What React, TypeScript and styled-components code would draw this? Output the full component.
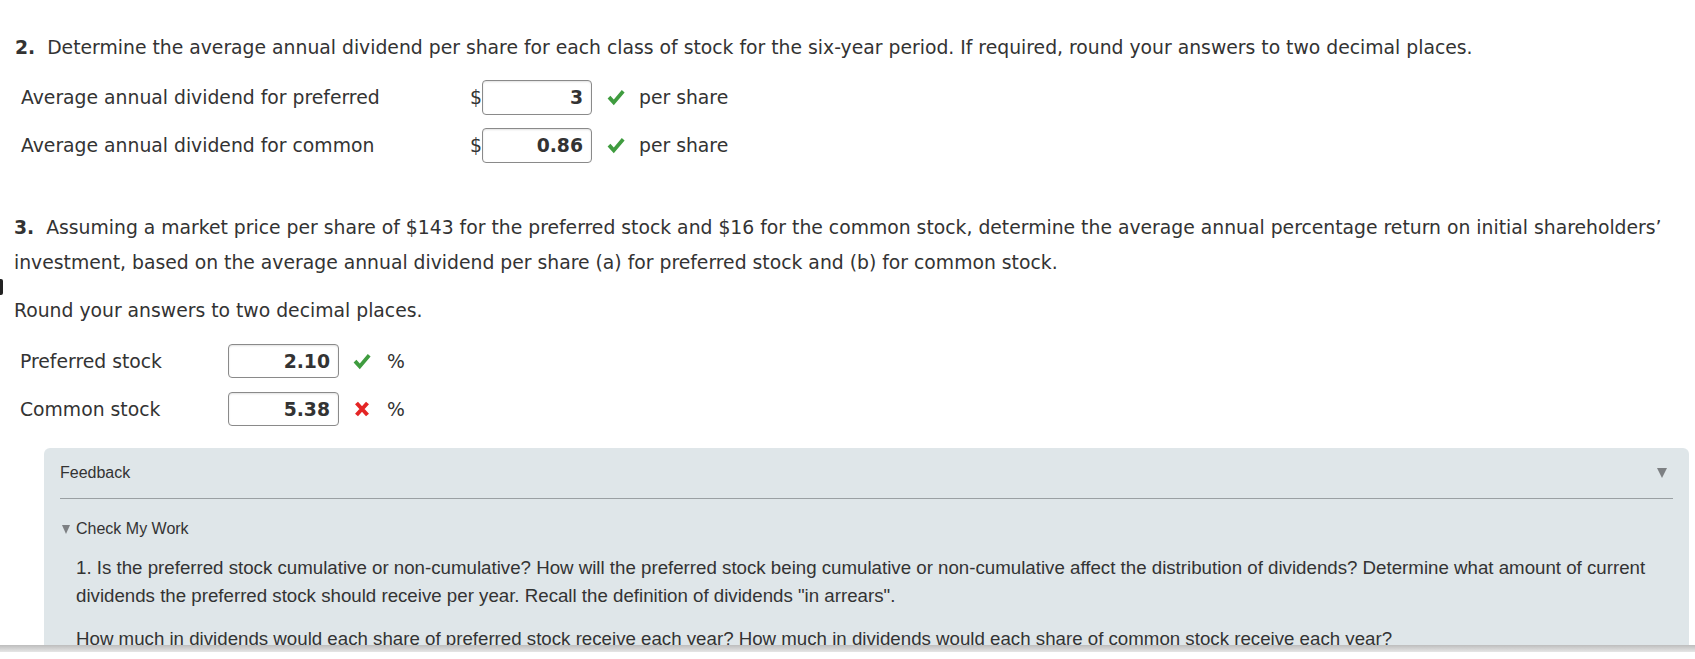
import React from "react";
import styled, { createGlobalStyle } from "styled-components";

const Global = createGlobalStyle`
  html, body { margin: 0; padding: 0; background: #fff; }
  body { font-family: "DejaVu Sans", Verdana, sans-serif; font-size: 18.8px; color: #333; }
`;

const Page = styled.div`
  width: 1695px;
  height: 659px;
  overflow: hidden;
  display: flex;
  flex-direction: column;
`;

const Viewport = styled.div`
  height: 645px;
  overflow: hidden;
  position: relative;
  flex: none;
`;

const BottomBar = styled.div`
  height: 7px;
  flex: none;
  background: linear-gradient(#bdbdbd, #d6d6d6 60%, #e6e6e6);
`;

const Section = styled.section<{ $top: number; $left: number }>`
  padding-top: ${(p) => p.$top}px;
  padding-left: ${(p) => p.$left}px;
`;

const Question = styled.p<{ $lh: number }>`
  margin: 0;
  line-height: ${(p) => p.$lh}px;
  b { font-weight: bold; }
`;

const Instruction = styled.p`
  margin: 15px 0 0;
  line-height: 32px;
`;

const Rows = styled.div<{ $top: number; $gap: number }>`
  margin-top: ${(p) => p.$top}px;
  display: flex;
  flex-direction: column;
  gap: ${(p) => p.$gap}px;
`;

const Row = styled.div<{ $label: number }>`
  display: grid;
  grid-template-columns: ${(p) => p.$label}px auto auto auto auto;
  justify-content: start;
  align-items: center;
`;

const Label = styled.span`
  white-space: nowrap;
`;

const Dollar = styled.span`
  width: 12px;
  text-align: left;
`;

const Field = styled.div<{ $w: number; $h: number }>`
  width: ${(p) => p.$w}px;
  height: ${(p) => p.$h}px;
  box-sizing: border-box;
  border: 1px solid #8a8a8a;
  border-radius: 4px;
  box-shadow: inset 0 1px 2px rgba(0, 0, 0, 0.12);
  display: flex;
  align-items: center;
  justify-content: flex-end;
  padding-right: 8px;
  font-weight: bold;
  color: #333;
  background: #fff;
`;

const Mark = styled.span<{ $ml: number }>`
  margin-left: ${(p) => p.$ml}px;
  width: 18px;
  display: flex;
  align-items: center;
  justify-content: center;
  svg { flex: none; display: block; }
`;

const Unit = styled.span<{ $ml: number }>`
  margin-left: ${(p) => p.$ml}px;
  white-space: nowrap;
`;

const EdgeMark = styled.div`
  position: absolute;
  left: 0;
  top: 279px;
  width: 3px;
  height: 16px;
  background: #222;
  border-radius: 0 2px 2px 0;
`;

const Panel = styled.div`
  margin: 22px 6px 0 44px;
  background: #dfe6e9;
  border-radius: 6px 6px 0 0;
  padding: 15px 16px 40px 16px;
  font-family: "Liberation Sans", Arial, sans-serif;
  color: #333;
`;

const PanelHead = styled.div`
  display: flex;
  justify-content: space-between;
  align-items: center;
  font-size: 16px;
  line-height: 20px;
  padding-bottom: 15px;
  border-bottom: 1px solid #9aa0a3;
`;

const Caret = styled.span<{ $size: number }>`
  display: inline-block;
  width: 0;
  height: 0;
  border-left: ${(p) => p.$size / 2}px solid transparent;
  border-right: ${(p) => p.$size / 2}px solid transparent;
  border-top: ${(p) => p.$size}px solid #7d8083;
`;

const Toggle = styled.div`
  margin-top: 20px;
  padding-left: 2px;
  display: flex;
  align-items: center;
  gap: 6px;
  font-size: 16px;
  line-height: 20px;
`;

const Body = styled.div`
  padding-left: 16px;
  font-size: 18.7px;
  line-height: 28px;
  p { margin: 15px 0 0; }
`;

const Check = () => (
  <svg width="18" height="17" viewBox="0 0 18 17">
    <path d="M0.6 9.6 L3.4 6.8 L6.8 10.4 L14.8 1 L17.6 3.6 L6.8 16.2 Z" fill="#3f9c3f" />
  </svg>
);

const Cross = () => (
  <svg width="16" height="16" viewBox="0 0 16 16">
    <path d="M2.5 2 L13.5 14 M13.5 2 L2.5 14" fill="none" stroke="#e42525" strokeWidth="4" strokeLinecap="butt" />
  </svg>
);

export default function App() {
  return (
    <Page>
      <Global />
      <Viewport>
        <EdgeMark />
        <Section $top={36} $left={15}>
          <Question $lh={24}>
            <b>2.</b>&nbsp; Determine the average annual dividend per share for each class of stock for the six-year period. If required, round your answers to two decimal places.
          </Question>
          <Rows $top={20} $gap={13}>
            <Row $label={455}>
              <Label>&nbsp;Average annual dividend for preferred</Label>
              <Dollar>$</Dollar>
              <Field $w={110} $h={35}>3</Field>
              <Mark $ml={15}><Check /></Mark>
              <Unit $ml={14}>per share</Unit>
            </Row>
            <Row $label={455}>
              <Label>&nbsp;Average annual dividend for common</Label>
              <Dollar>$</Dollar>
              <Field $w={110} $h={35}>0.86</Field>
              <Mark $ml={15}><Check /></Mark>
              <Unit $ml={14}>per share</Unit>
            </Row>
          </Rows>
        </Section>
        <Section $top={47} $left={14}>
          <Question $lh={35}>
            <b>3.</b>&nbsp; Assuming a market price per share of $143 for the preferred stock and $16 for the common stock, determine the average annual percentage return on initial shareholders’ investment, based on the average annual dividend per share (a) for preferred stock and (b) for common stock.
          </Question>
          <Instruction>Round your answers to two decimal places.</Instruction>
          <Rows $top={17} $gap={14}>
            <Row $label={214}>
              <Label>&nbsp;Preferred stock</Label>
              <span />
              <Field $w={111} $h={34}>2.10</Field>
              <Mark $ml={14}><Check /></Mark>
              <Unit $ml={16}>%</Unit>
            </Row>
            <Row $label={214}>
              <Label>&nbsp;Common stock</Label>
              <span />
              <Field $w={111} $h={34}>5.38</Field>
              <Mark $ml={14}><Cross /></Mark>
              <Unit $ml={16}>%</Unit>
            </Row>
          </Rows>
        </Section>
        <Panel>
          <PanelHead>
            <span>Feedback</span>
            <Caret $size={10} style={{ marginRight: 6 }} />
          </PanelHead>
          <Toggle>
            <Caret $size={9} />
            <span>Check My Work</span>
          </Toggle>
          <Body>
            <p>
              1. Is the preferred stock cumulative or non-cumulative? How will the preferred stock being cumulative or non-cumulative affect the distribution of dividends? Determine what amount of current dividends the preferred stock should receive per year. Recall the definition of dividends "in arrears".
            </p>
            <p>
              How much in dividends would each share of preferred stock receive each year? How much in dividends would each share of common stock receive each year?
            </p>
          </Body>
        </Panel>
      </Viewport>
      <BottomBar />
    </Page>
  );
}
